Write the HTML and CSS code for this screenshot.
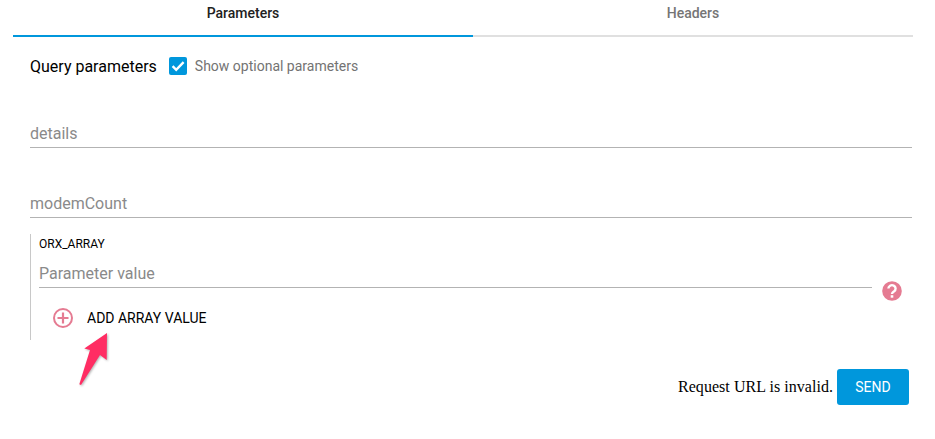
FILE: index.html
```html
<!DOCTYPE html>
<html lang="en">
<head>
<meta charset="utf-8">
<title>Parameters</title>
<link rel="stylesheet" href="styles.css">
</head>
<body>
<div class="tabs">
  <div class="tab active">Parameters</div>
  <div class="tab">Headers</div>
</div>
<div class="panel">
  <div class="section-head">
    <span class="section-title">Query parameters</span>
    <span class="check"><svg width="18" height="18" viewBox="0 0 18 18"><path d="M3.6 9.2l3.6 3.6L14.6 5.2" fill="none" stroke="#fff" stroke-width="2.4"/></svg></span>
    <span class="check-label">Show optional parameters</span>
  </div>
  <div class="field field-first"><span class="field-text">details</span></div>
  <div class="field field-second"><span class="field-text">modemCount</span></div>
  <div class="array">
    <div class="array-title">ORX_ARRAY</div>
    <div class="array-row">
      <div class="array-input"><span class="field-text">Parameter value</span></div>
      <svg class="help" width="20" height="20" viewBox="0 0 20 20"><circle cx="10" cy="10" r="9.8" fill="#e57b92"/><path d="M6.4 7.6a3.6 3.4 0 1 1 5.6 2.8c-1.3.9-2 1.3-2 2.6" fill="none" stroke="#fff" stroke-width="2.4"/><rect x="8.7" y="14.2" width="2.6" height="2.5" fill="#fff"/></svg>
    </div>
    <div class="add-row">
      <svg class="add-icon" width="20" height="20" viewBox="0 0 20 20"><circle cx="10" cy="10" r="9" fill="none" stroke="#e57b92" stroke-width="2"/><path d="M10 4.5v11M4.5 10h11" stroke="#e57b92" stroke-width="2.2"/></svg>
      <span class="add-label">ADD ARRAY VALUE</span>
    </div>
  </div>
  <div class="actions">
    <span class="invalid">Request URL is invalid.</span>
    <button class="send">SEND</button>
  </div>
</div>
<svg class="arrow" width="44" height="60" viewBox="0 0 44 60"><path d="M29 0L6.3 15.5 12 17 1.3 51.3 3 52 22 22l6.7 5z" fill="#ff2d63"/></svg>
</body>
</html>
```
FILE: styles.css
```css
* { box-sizing: border-box; }
html, body { margin: 0; padding: 0; }
body {
  width: 935px;
  height: 439px;
  overflow: hidden;
  background: #fff;
  font-family: Roboto, sans-serif;
  position: relative;
}
.tabs {
  display: flex;
  margin: 0 22px 0 13px;
  height: 37px;
}
.tab {
  flex: 1;
  text-align: center;
  font-size: 14px;
  font-weight: 500;
  line-height: 16px;
  padding-top: 5px;
  color: #757575;
  border-bottom: 2px solid #e0e0e0;
}
.tab.active {
  flex: 0 0 460px;
  color: #212121;
  border-bottom-color: #0097dc;
}
.panel {
  padding: 0 23px 0 30px;
}
.section-head {
  display: flex;
  align-items: center;
  height: 18px;
  margin-top: 20px;
}
.section-title {
  font-size: 16px;
  color: #000;
}
.check {
  width: 18px;
  height: 18px;
  margin-left: 12px;
  background: #0097dc;
  border-radius: 2px;
  display: block;
}
.check svg { display: block; }
.check-label {
  margin-left: 8px;
  font-size: 14px;
  color: #737373;
}
.field {
  height: 33px;
  border-bottom: 1px solid #b3b3b3;
}
.field-first { margin-top: 40px; }
.field-second { margin-top: 37px; }
.field-text {
  font-size: 16px;
  line-height: 20px;
  color: #8a8a8a;
  display: block;
  padding-top: 9px;
}
.array {
  margin-top: 16px;
  border-left: 1px solid #c8c8c8;
  padding-left: 8px;
  height: 106px;
}
.array-title {
  font-size: 12px;
  line-height: 14px;
  padding-top: 3px;
  height: 16px;
  color: #000;
}
.array-row {
  display: flex;
  align-items: flex-start;
  margin-top: 4px;
}
.array-input {
  flex: 1;
  height: 34px;
  border-bottom: 1px solid #b3b3b3;
}
.array-input .field-text { padding-top: 10px; }
.help { margin: 27px 10px 0 10px; flex: none; }
.add-row {
  display: flex;
  align-items: center;
  margin-top: 7px;
  padding-left: 14px;
}
.add-label {
  margin-left: 14px;
  font-size: 14px;
  color: #000;
}
.actions {
  display: flex;
  justify-content: flex-end;
  align-items: center;
  margin-top: 29px;
  margin-right: 3px;
}
.invalid {
  font-family: "Liberation Serif", serif;
  font-size: 16px;
  letter-spacing: .04px;
  color: #000;
  margin-right: 4px;
}
.send {
  width: 72px;
  height: 36px;
  border: 0;
  border-radius: 3px;
  background: #0097dc;
  color: #fff;
  font-family: Roboto, sans-serif;
  font-size: 14px;
  font-weight: 400;
  padding: 0;
}
.arrow {
  position: absolute;
  left: 78px;
  top: 333px;
  filter: drop-shadow(1px 1px 1px rgba(0,0,0,.3));
}
```
